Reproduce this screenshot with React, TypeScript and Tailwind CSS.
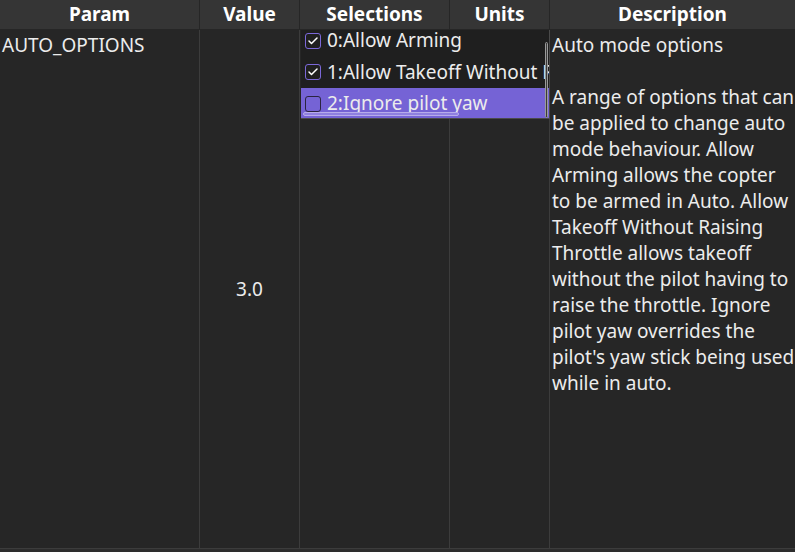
import { Check } from "lucide-react";

const DESCRIPTION = [
  "A range of options that can",
  "be applied to change auto",
  "mode behaviour. Allow",
  "Arming allows the copter",
  "to be armed in Auto. Allow",
  "Takeoff Without Raising",
  "Throttle allows takeoff",
  "without the pilot having to",
  "raise the throttle. Ignore",
  "pilot yaw overrides the",
  "pilot's yaw stick being used",
  "while in auto.",
];

const OPTIONS = [
  { label: "0:Allow Arming", checked: true },
  { label: "1:Allow Takeoff Without Raising Throttle", checked: true },
  { label: "2:Ignore pilot yaw", checked: false },
];

function HeaderCell({ children, last }: { children: string; last?: boolean }) {
  return (
    <div
      className={`flex h-[29px] items-center justify-center text-[19px] font-bold text-white ${
        last ? "" : "border-r border-[#262626]"
      }`}
    >
      {children}
    </div>
  );
}

function SelectionList() {
  return (
    <div className="absolute left-[1px] top-0 h-[89px] w-[249px] overflow-hidden border-r border-b border-[#4a4a4a] bg-[#1f1f1f]">
      <div className="-mt-[5px] flex flex-col">
        {OPTIONS.map((o, i) => {
          const active = i === 2;
          return (
            <div
              key={o.label}
              className={`flex h-[31.5px] items-center gap-[6px] whitespace-nowrap pl-[4px] ${
                active ? "bg-[#7563d5]" : ""
              }`}
            >
              <div
                className={`grid h-[16px] w-[16px] shrink-0 place-items-center rounded-[3px] border ${
                  active ? "border-[#2a2440] bg-[#7563d5]" : "border-[#7b68d9] bg-[#1f1f1f]"
                }`}
              >
                {o.checked && <Check className="h-[12px] w-[12px] text-white" strokeWidth={3} />}
              </div>
              <span className="text-[19px] leading-none text-[#ececec]">{o.label}</span>
            </div>
          );
        })}
      </div>
      {/* horizontal scrollbar */}
      <div className="absolute bottom-[2px] left-[2px] h-[4px] w-[156px] rounded-full border border-[#b7aceb] bg-[#8f80e0]" />
      {/* vertical scrollbar */}
      <div className="absolute right-[1px] top-[12px] h-[76px] w-[3px] rounded-full border border-[#9a9a9a] bg-[#3a3a3a]" />
    </div>
  );
}

export default function App() {
  return (
    <div
      className="flex h-[552px] w-[795px] flex-col overflow-hidden bg-[#2d2d2d] text-[#ececec]"
      style={{ fontFamily: '"Noto Sans", "Open Sans", sans-serif' }}
    >
      <div className="grid grid-cols-[200px_100px_150px_100px_1fr] border-b border-[#262626] bg-[#353535]">
        <HeaderCell>Param</HeaderCell>
        <HeaderCell>Value</HeaderCell>
        <HeaderCell>Selections</HeaderCell>
        <HeaderCell>Units</HeaderCell>
        <HeaderCell last>Description</HeaderCell>
      </div>
      <div className="grid h-[519px] grid-cols-[200px_100px_150px_100px_1fr] border-b border-[#3c3c3c] bg-[#262626] text-[19px] leading-[26px]">
        <div className="border-r border-[#3c3c3c] pl-[2px] pt-[2px]">AUTO_OPTIONS</div>
        <div className="flex items-center justify-center border-r border-[#3c3c3c]">3.0</div>
        <div className="relative border-r border-[#3c3c3c]">
          <SelectionList />
        </div>
        <div className="border-r border-[#3c3c3c]" />
        <div className="whitespace-nowrap pl-[2px] pt-[2px]">
          <div>Auto mode options</div>
          <div className="h-[26px]" />
          {DESCRIPTION.map((l) => (
            <div key={l}>{l}</div>
          ))}
        </div>
      </div>
    </div>
  );
}
